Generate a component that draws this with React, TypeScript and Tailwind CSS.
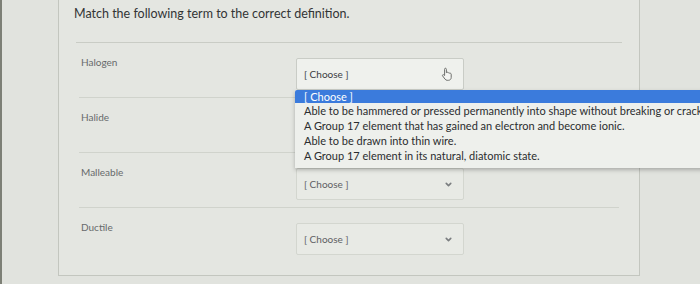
import React from 'react';

const font = { fontFamily: 'Lato, "Open Sans", Arial, sans-serif' };

const Chevron: React.FC = () => (
  <svg className="w-[9px] h-[9px] text-[#7b7e80]" viewBox="0 0 10 10" fill="none" stroke="currentColor" strokeWidth="1.8" strokeLinecap="round" strokeLinejoin="round">
    <path d="M2.5 3.8L5 6.3l2.5-2.5" />
  </svg>
);

const Pointer: React.FC = () => (
  <svg className="w-[12px] h-[14px]" viewBox="0 0 12 14" fill="#f4f5f2" stroke="#6d6f6c" strokeWidth="1" strokeLinejoin="round">
    <path d="M4.2 1.2c.8 0 1.2.5 1.2 1.2v3.4l.3-.3c.6-.5 1.4-.2 1.6.4.6-.4 1.4-.1 1.5.5.6-.3 1.4 0 1.4.8v3.3c0 1.6-1.2 2.8-2.8 2.8H6.2c-.9 0-1.6-.4-2.1-1.1L1.6 8.9c-.5-.7.3-1.6 1.1-1.1l.9.7V2.4c0-.7.3-1.2.6-1.2z" />
  </svg>
);

const Select: React.FC<{ open?: boolean; hidden?: boolean }> = ({ open, hidden }) => (
  <div
    className={`w-[168px] h-[32px] border rounded-[2px] flex items-center justify-between pl-[7px] pr-[10px] ${
      open ? 'bg-[#eff1ed] border-[#c9ccc6]' : 'bg-[#e8eae5] border-[#d3d6cf]'
    } ${hidden ? 'invisible' : ''}`}
  >
    <span className={`text-[10px] ${open ? 'text-[#3b3d3f]' : 'text-[#5e6163]'}`}>[ Choose ]</span>
    {open ? <Pointer /> : <Chevron />}
  </div>
);

const rows = ['Halogen', 'Halide', 'Malleable', 'Ductile'];

const options = [
  'Able to be hammered or pressed permanently into shape without breaking or cracking.',
  'A Group 17 element that has gained an electron and become ionic.',
  'Able to be drawn into thin wire.',
  'A Group 17 element in its natural, diatomic state.',
];

export default function App() {
  return (
    <div className="relative w-[700px] h-[284px] overflow-hidden bg-[#e1e3de] flex" style={font}>
      {/* dark edge of the monitor */}
      <div className="w-[2px] h-full bg-[#7d8076]" />

      {/* question card */}
      <div className="ml-[56px] w-[582px] h-[276px] border-l border-r border-b border-[#c3c6bf] bg-[#e4e6e1] flex flex-col">
        <div className="pl-[15px] pt-[6px] text-[12.5px] leading-[16px] text-[#323435]">
          Match the following term to the correct definition.
        </div>
        <div className="mx-[17px] mt-[20px] border-t border-[#c9ccc5]" />

        <div className="mx-[20px] flex flex-col">
          {rows.map((label, i) => (
            <div
              key={label}
              className={`h-[55px] flex ${i < rows.length - 1 ? 'border-b border-[#d0d3cc]' : ''}`}
            >
              <div className="w-[217px] pl-[2px] pt-[12px] text-[10px] leading-[14px] text-[#676a6b]">{label}</div>
              <div className="pt-[15px]">
                {/* the second select sits under the open listbox */}
                <Select open={i === 0} hidden={i === 1} />
              </div>
            </div>
          ))}
        </div>
      </div>

      {/* open listbox of the first select */}
      <div className="absolute left-[295px] top-[90px] w-[430px] h-[78px] bg-[#eef0ec] shadow-[0_2px_4px_rgba(0,0,0,0.25)] text-[11px] text-[#2b2d2f]">
        <div className="h-[13px] leading-[13px] bg-[#3b7bdc] text-white pl-[9px] rounded-tl-[2px]">[ Choose ]</div>
        <div className="pt-[1px]">
          {options.map(o => (
            <div key={o} className="pl-[9px] h-[15px] leading-[14px] whitespace-nowrap">{o}</div>
          ))}
        </div>
      </div>
    </div>
  );
}
